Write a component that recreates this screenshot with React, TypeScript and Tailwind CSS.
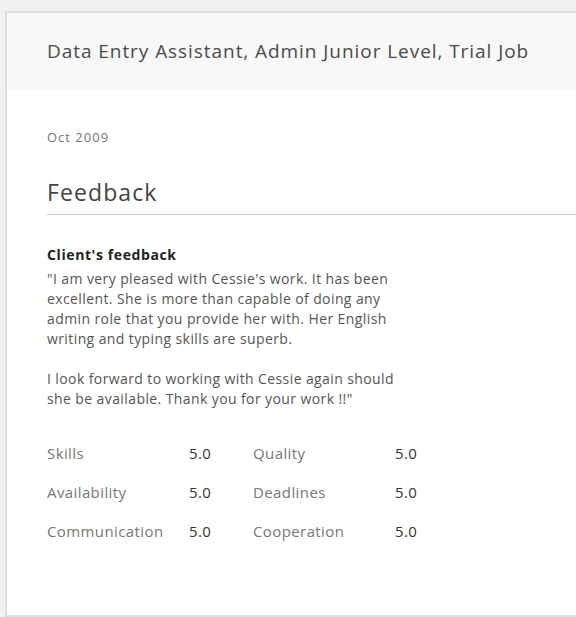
import React from "react";

const ratings = [
  ["Skills", "5.0", "Quality", "5.0"],
  ["Availability", "5.0", "Deadlines", "5.0"],
  ["Communication", "5.0", "Cooperation", "5.0"],
];

const App: React.FC = () => {
  return (
    <div
      className="w-[576px] h-[617px] overflow-hidden bg-[#f1f1f1] pt-[11px] pl-[5px]"
      style={{ fontFamily: '"Open Sans", Arial, sans-serif' }}
    >
      <div className="w-[600px] h-[606px] border-2 border-r-0 border-[#dedede] bg-white">
        <div className="h-[76px] bg-[#f8f8f8] pl-[40px] flex items-center">
          <h2 className="text-[19px] text-[#4a4a4a] tracking-[0.94px]">
            Data Entry Assistant, Admin Junior Level, Trial Job
          </h2>
        </div>

        <div className="pl-[40px] pt-[39px]">
          <p className="text-[13px] text-[#777] leading-[18px] tracking-[1px]">Oct 2009</p>

          <h3 className="mt-[31px] text-[23px] text-[#444] leading-[30px] tracking-[1.1px] pb-[7px] border-b border-[#c8c8c8]">
            Feedback
          </h3>

          <div className="mt-[30px] w-[354px] tracking-[0.4px]">
            <p className="text-[14px] font-bold text-[#222] leading-[20px] tracking-[0.6px]">
              Client's feedback
            </p>
            <p className="mt-[4px] text-[14px] text-[#555] leading-[20px]">
              "I am very pleased with Cessie's work. It has been excellent. She is more than capable of
              doing any admin role that you provide her with. Her English writing and typing skills are
              superb.
            </p>
            <p className="mt-[20px] text-[14px] text-[#555] leading-[20px]">
              I look forward to working with Cessie again should she be available. Thank you for your
              work !!"
            </p>
          </div>

          <div className="mt-[34px] flex flex-col gap-[19px]">
            {ratings.map((r) => (
              <div key={r[0]} className="flex text-[15px] leading-[20px] tracking-[0.4px]">
                <span className="w-[142px] text-[#777]">{r[0]}</span>
                <span className="w-[64px] text-[#333]">{r[1]}</span>
                <span className="w-[142px] text-[#777]">{r[2]}</span>
                <span className="text-[#333]">{r[3]}</span>
              </div>
            ))}
          </div>
        </div>
      </div>
    </div>
  );
};

export default App;
